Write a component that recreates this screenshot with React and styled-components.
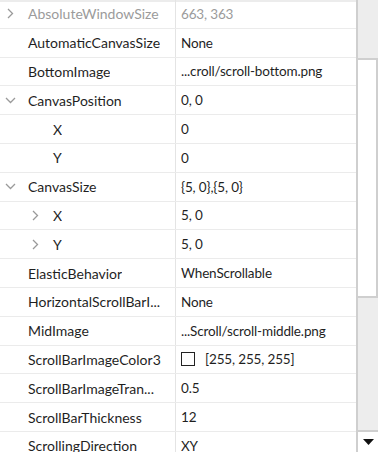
import React from 'react'
import styled, { createGlobalStyle } from 'styled-components'

const GlobalStyle = createGlobalStyle`
  html, body {
    margin: 0;
    padding: 0;
    background: #ffffff;
  }
  body {
    font-family: Lato, "Open Sans", sans-serif;
    font-size: 14px;
    color: #1f1f1f;
  }
`

const rows = [
  { name: 'AbsoluteWindowSize', value: '663, 363', toggle: 'closed', disabled: true },
  { name: 'AutomaticCanvasSize', value: 'None' },
  { name: 'BottomImage', value: '...croll/scroll-bottom.png' },
  { name: 'CanvasPosition', value: '0, 0', toggle: 'open' },
  { name: 'X', value: '0', depth: 1 },
  { name: 'Y', value: '0', depth: 1 },
  { name: 'CanvasSize', value: '{5, 0},{5, 0}', toggle: 'open' },
  { name: 'X', value: '5, 0', depth: 1, toggle: 'closed' },
  { name: 'Y', value: '5, 0', depth: 1, toggle: 'closed' },
  { name: 'ElasticBehavior', value: 'WhenScrollable' },
  { name: 'HorizontalScrollBarI...', value: 'None' },
  { name: 'MidImage', value: '...Scroll/scroll-middle.png' },
  { name: 'ScrollBarImageColor3', value: '[255, 255, 255]', swatch: '#ffffff' },
  { name: 'ScrollBarImageTran...', value: '0.5' },
  { name: 'ScrollBarThickness', value: '12' },
  { name: 'ScrollingDirection', value: 'XY' },
]

function Chevron({ open }) {
  if (open) {
    return (
      <svg width="11" height="7" viewBox="0 0 11 7">
        <path d="M1 1 L5.5 5.5 L10 1" fill="none" stroke="#9a9a9a" strokeWidth="1.3" />
      </svg>
    )
  }
  return (
    <svg width="7" height="11" viewBox="0 0 7 11">
      <path d="M1 1 L5.5 5.5 L1 10" fill="none" stroke="#9a9a9a" strokeWidth="1.3" />
    </svg>
  )
}

function App() {
  return (
    <>
      <GlobalStyle />
      <Panel>
        <List>
          {rows.map((row, i) => (
            <Row key={i} $first={i === 0}>
              <NameCell $depth={row.depth || 0}>
                <Toggle>
                  {row.toggle && <Chevron open={row.toggle === 'open'} />}
                </Toggle>
                <Label $disabled={row.disabled}>{row.name}</Label>
              </NameCell>
              <ValueCell $disabled={row.disabled}>
                {row.swatch && <Swatch style={{ background: row.swatch }} />}
                {row.value}
              </ValueCell>
            </Row>
          ))}
        </List>
        <ScrollBar>
          <Track $h="58px" />
          <Thumb />
          <Track $grow />
          <ArrowButton>
            <svg width="11" height="6" viewBox="0 0 11 6">
              <path d="M0 0 H11 L5.5 6 Z" fill="#111" />
            </svg>
          </ArrowButton>
        </ScrollBar>
      </Panel>
    </>
  )
}

const Panel = styled.div`
  display: flex;
  width: 378px;
  height: 452px;
  overflow: hidden;
`

const List = styled.div`
  flex: 1;
  min-width: 0;
  display: flex;
  flex-direction: column;
`

const Row = styled.div`
  display: flex;
  flex: none;
  height: 28.8px;
  box-sizing: border-box;
  border-bottom: 1px solid #ebebeb;
  box-shadow: ${(p) => (p.$first ? 'inset 0 2px 0 #ececec' : 'none')};
`

const NameCell = styled.div`
  width: 176px;
  flex: none;
  display: flex;
  align-items: center;
  border-right: 1px solid #e4e4e4;
  box-sizing: border-box;
  padding-left: ${(p) => p.$depth * 25}px;
`

const Toggle = styled.div`
  width: 20px;
  flex: none;
  display: flex;
  align-items: center;
  justify-content: center;
`

const Label = styled.span`
  padding-left: 8px;
  white-space: nowrap;
  overflow: hidden;
  color: ${(p) => (p.$disabled ? '#9b9b9b' : '#1f1f1f')};
`

const ValueCell = styled.div`
  flex: 1;
  display: flex;
  align-items: center;
  gap: 10px;
  padding-left: 5px;
  font-size: 13.5px;
  letter-spacing: -0.15px;
  white-space: nowrap;
  overflow: hidden;
  color: ${(p) => (p.$disabled ? '#9b9b9b' : '#1f1f1f')};
`

const Swatch = styled.span`
  width: 14px;
  height: 14px;
  box-sizing: border-box;
  border: 1px solid #222;
  flex: none;
`

const ScrollBar = styled.div`
  width: 22px;
  flex: none;
  display: flex;
  flex-direction: column;
  background: #ededed;
  border-left: 2px solid #cfcfcf;
  box-sizing: border-box;
`

const Track = styled.div`
  flex: ${(p) => (p.$grow ? '1' : 'none')};
  height: ${(p) => p.$h || 'auto'};
`

const Thumb = styled.div`
  height: 240px;
  flex: none;
  background: #ffffff;
  border: 2px solid #cfcfcf;
  border-left: none;
  box-sizing: border-box;
`

const ArrowButton = styled.div`
  height: 22px;
  flex: none;
  display: flex;
  align-items: center;
  justify-content: center;
  background: #ffffff;
  border-top: 2px solid #cfcfcf;
  box-sizing: border-box;
`

export default App
